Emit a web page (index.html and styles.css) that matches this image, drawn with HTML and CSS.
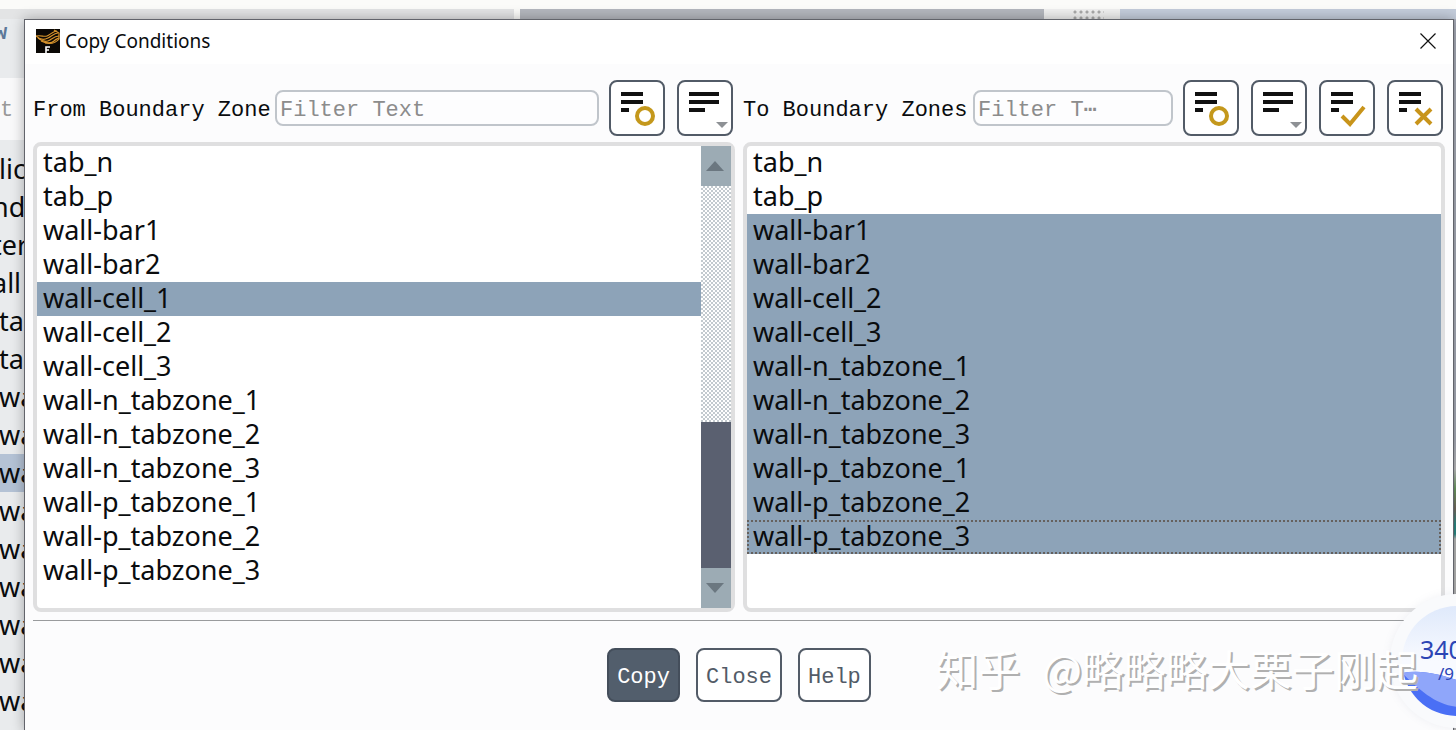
FILE: index.html
```html
<!DOCTYPE html>
<html lang="en">
<head>
  <meta charset="UTF-8" />
  <meta name="viewport" content="width=device-width, initial-scale=1.0" />
  <title>Copy Conditions</title>
  <link rel="stylesheet" href="styles.css">
</head>
<body>
  <!-- main window behind the dialog -->
  <div class="backdrop">
    <div class="topbar">
      <div class="tab tab-light"></div>
      <div class="tab tab-dark"></div>
      <div class="grip"></div>
      <div class="tab tab-blue"></div>
    </div>
    <div class="side-title">w</div>
    <div class="side-filter">t</div>
    <ul class="tree">
      <li>lic</li>
      <li class="outdent">nda</li>
      <li class="outdent">ter</li>
      <li class="outdent">all</li>
      <li>tab</li>
      <li>tab</li>
      <li>wa</li>
      <li>wa</li>
      <li class="active">wa</li>
      <li>wa</li>
      <li>wa</li>
      <li>wa</li>
      <li>wa</li>
      <li>wa</li>
      <li>wa</li>
    </ul>
    <div class="model"></div>
  </div>

  <div class="dialog" role="dialog" aria-labelledby="title">
    <div class="titlebar">
      <svg class="logo" viewBox="0 0 24 24">
        <rect width="24" height="24" fill="#0b0805"/>
        <g fill="none" stroke="#d8942c" stroke-width="1.2">
          <path d="M0 7c5-1 8 1 11 0s6-5 10-5"/>
          <path d="M0 7c4 4 8 4 12 2s6-5 10-5"/>
          <path d="M2 9c5 4 9 4 12 2s5-4 9-4"/>
          <path d="M5 12c6 3 11 2 13 0s3-2 5-3"/>
          <path d="M9 14c5 1 10 1 14-4V4l-5-3"/>
        </g>
        <path d="M10 24v-6h4M10 21h3" fill="none" stroke="#fff" stroke-width="1.6"/>
      </svg>
      <h1 id="title">Copy Conditions</h1>
      <button class="close" aria-label="Close window">
        <svg viewBox="0 0 16 16"><path d="M.5.5l15 15M15.5.5l-15 15" stroke="#111" stroke-width="1.2"/></svg>
      </button>
    </div>

    <div class="panes">
      <section class="pane">
        <div class="toolbar">
          <label class="from" for="fromFilter">From Boundary Zone</label>
          <input type="text" id="fromFilter" placeholder="Filter Text">
          <div class="tools">
            <button class="tool" aria-label="Toggle selection">
              <svg viewBox="0 0 52 52"><path d="M10 12h22M10 20h22M10 28h8" stroke="#111" stroke-width="4"/><circle cx="34" cy="34" r="8" fill="none" stroke="#c4981c" stroke-width="4"/></svg>
            </button>
            <button class="tool" aria-label="Group list">
              <svg viewBox="0 0 52 52"><path d="M10 12h30M10 20h30M10 28h16" stroke="#111" stroke-width="4"/><path d="M37 40h12l-6 6z" fill="#8e9195"/></svg>
            </button>
          </div>
        </div>
        <div class="listbox">
          <ul role="listbox" aria-label="From Boundary Zone">
            <li role="option">tab_n</li>
            <li role="option">tab_p</li>
            <li role="option">wall-bar1</li>
            <li role="option">wall-bar2</li>
            <li role="option" class="selected" aria-selected="true">wall-cell_1</li>
            <li role="option">wall-cell_2</li>
            <li role="option">wall-cell_3</li>
            <li role="option">wall-n_tabzone_1</li>
            <li role="option">wall-n_tabzone_2</li>
            <li role="option">wall-n_tabzone_3</li>
            <li role="option">wall-p_tabzone_1</li>
            <li role="option">wall-p_tabzone_2</li>
            <li role="option">wall-p_tabzone_3</li>
          </ul>
          <div class="scrollbar">
            <button aria-label="Scroll up"><svg viewBox="0 0 18 10"><path d="M0 10l9-10 9 10z"/></svg></button>
            <div class="track"></div>
            <div class="thumb"></div>
            <button aria-label="Scroll down"><svg viewBox="0 0 18 10"><path d="M0 0l9 10 9-10z"/></svg></button>
          </div>
        </div>
      </section>

      <section class="pane">
        <div class="toolbar">
          <label class="to" for="toFilter">To Boundary Zones</label>
          <input type="text" id="toFilter" placeholder="Filter T⋯">
          <div class="tools">
            <button class="tool" aria-label="Toggle selection">
              <svg viewBox="0 0 52 52"><path d="M10 12h22M10 20h22M10 28h8" stroke="#111" stroke-width="4"/><circle cx="34" cy="34" r="8" fill="none" stroke="#c4981c" stroke-width="4"/></svg>
            </button>
            <button class="tool" aria-label="Group list">
              <svg viewBox="0 0 52 52"><path d="M10 12h30M10 20h30M10 28h16" stroke="#111" stroke-width="4"/><path d="M37 40h12l-6 6z" fill="#8e9195"/></svg>
            </button>
            <button class="tool" aria-label="Select all">
              <svg viewBox="0 0 52 52"><path d="M10 12h22M10 20h22M10 28h8" stroke="#111" stroke-width="4"/><path d="M21 34l8 8 14-17" fill="none" stroke="#c8941a" stroke-width="4"/></svg>
            </button>
            <button class="tool" aria-label="Deselect all">
              <svg viewBox="0 0 52 52"><path d="M10 12h22M10 20h22M10 28h8" stroke="#111" stroke-width="4"/><path d="M27 27l15 15M42 27L27 42" stroke="#c8941a" stroke-width="4"/></svg>
            </button>
          </div>
        </div>
        <div class="listbox">
          <ul role="listbox" aria-label="To Boundary Zones" aria-multiselectable="true">
            <li role="option">tab_n</li>
            <li role="option">tab_p</li>
            <li role="option" class="selected" aria-selected="true">wall-bar1</li>
            <li role="option" class="selected" aria-selected="true">wall-bar2</li>
            <li role="option" class="selected" aria-selected="true">wall-cell_2</li>
            <li role="option" class="selected" aria-selected="true">wall-cell_3</li>
            <li role="option" class="selected" aria-selected="true">wall-n_tabzone_1</li>
            <li role="option" class="selected" aria-selected="true">wall-n_tabzone_2</li>
            <li role="option" class="selected" aria-selected="true">wall-n_tabzone_3</li>
            <li role="option" class="selected" aria-selected="true">wall-p_tabzone_1</li>
            <li role="option" class="selected" aria-selected="true">wall-p_tabzone_2</li>
            <li role="option" class="selected current" aria-selected="true">wall-p_tabzone_3</li>
          </ul>
        </div>
      </section>
    </div>

    <div class="actions">
      <button class="primary">Copy</button>
      <button>Close</button>
      <button>Help</button>
    </div>
  </div>

  <!-- floating memory ball -->
  <div class="ball">
    <div class="ball-inner">
      <svg viewBox="0 0 110 110">
        <path d="M0 67c20-4 40 2 58 8s36 2 52-8v43H0z" fill="#4a6ff5"/>
        <path d="M0 67c20-4 40 2 58 8s36 2 52-8c-8 24-30 35-52 34C34 100 18 84 0 67z" fill="#8fa6fa"/>
      </svg>
      <div class="ball-text">
        <strong>340</strong>
        <span>/9</span>
      </div>
    </div>
  </div>
  <div class="watermark"><span>知乎</span><span>@略略略大栗子刚起</span></div>
</body>
</html>
```
FILE: styles.css
```css
* {
  margin: 0; padding: 0; box-sizing: border-box;
}
body {
  height: 100vh;
  overflow: hidden;
  position: relative;
  background: #e9ebed;
  font-family: 'Noto Sans', 'Noto Sans CJK SC', sans-serif;
  color: #0a0c0e;
}
ul {
  list-style: none;
}
button {
  cursor: pointer;
}
.backdrop {
  height: 100%;
  overflow: hidden;
}
.topbar {
  display: flex;
  height: 19px;
  padding-top: 9px;
  background: #fbfbf9;
}
.tab-light {
  flex: 514;
  margin-right: 6px;
  background: #e3e4e5;
}
.tab-dark {
  flex: 524;
  background: #b4b7be;
}
.grip {
  flex: 32;
  padding: 0 16px 0 28px;
  background: radial-gradient(circle, #aaa 1px, transparent 2px) 0 0 / 6px 6px content-box, #f0f0f0;
}
.tab-blue {
  flex: 336;
  background: #c4cddb;
}
.side-title {
  height: 59px;
  font: bold 22px/30px 'Liberation Mono', monospace;
  color: #5d7899;
  text-indent: -6px;
}
.side-filter {
  height: 62px;
  margin-bottom: 10px;
  background: #f9f9fa;
  font: 22px/66px 'Liberation Mono', monospace;
  color: #999;
}
.tree li {
  width: 60px;
  height: 38px;
  font-size: 27px;
  line-height: 38px;
  text-indent: -1px;
}
.tree .outdent {
  text-indent: -8px;
}
.tree .active {
  background: #b4c2d5;
}
.model {
  position: absolute;
  top: 19px;
  right: 0;
  bottom: 0;
  width: 4px;
  background: linear-gradient(#a9adb9 0 420px, #bdbdbf 450px, #6c9a62 470px, #74695f 490px, #2d8a86 505px 515px, #b9b9b9 520px);
}
.dialog {
  position: absolute;
  top: 19px;
  left: 24px;
  right: 2px;
  bottom: -1px;
  display: flex;
  flex-direction: column;
  background: #fcfcfd;
  border: 1px solid #62646b;
  box-shadow: 0 0 12px rgba(0,0,0,0.3);
}
.titlebar {
  display: flex;
  align-items: center;
  height: 44px;
  padding: 0 17px 2px 11px;
  background: #fff;
}
.logo {
  width: 24px;
  height: 24px;
}
h1 {
  flex: 1;
  margin-left: 5px;
  font-size: 19px;
  font-weight: 400;
}
.close {
  width: 16px;
  height: 16px;
  border: none;
  background: none;
}
.close svg {
  display: block;
}
.panes {
  display: grid;
  grid-template-columns: 1fr 1fr;
  gap: 8px;
  padding: 16px 8px 8px;
}
.pane {
  min-width: 0;
}
.toolbar {
  display: flex;
  align-items: center;
  gap: 8px;
  height: 56px;
  margin-bottom: 6px;
  padding-right: 2px;
}
label, input, .actions button {
  font-family: 'Liberation Mono', 'DejaVu Sans Mono', monospace;
  font-size: 22px;
  padding-top: 4px;
}
label {
  flex: none;
  white-space: nowrap;
}
.from {
  width: 234px;
}
.to {
  width: 222px;
}
input {
  flex: 1;
  min-width: 0;
  height: 36px;
  padding: 4px 3px 0;
  border: 2px solid #c0c5cb;
  border-radius: 8px;
  background: #fdfdfe;
}
input::placeholder {
  color: #8c8c8c;
}
.tools {
  display: flex;
  gap: 12px;
  margin-left: 2px;
}
.tool {
  width: 56px;
  height: 56px;
  border: 2px solid #525b67;
  border-radius: 8px;
  background: #fff;
}
.tool svg {
  display: block;
}
.listbox {
  display: flex;
  height: 470px;
  border: 4px solid #dfdfe0;
  border-radius: 8px;
  background: #fff;
}
.listbox ul {
  flex: 1;
}
.listbox li {
  height: 34px;
  padding-left: 6px;
  font-size: 27px;
  line-height: 32px;
}
.listbox .selected {
  background: #8da3b8;
}
.listbox .current {
  outline: 2px dotted #66615e;
  outline-offset: -2px;
}
.scrollbar {
  display: flex;
  flex-direction: column;
  width: 30px;
}
.scrollbar button {
  display: flex;
  align-items: center;
  justify-content: center;
  height: 40px;
  padding-right: 2px;
  border: none;
  background: #9cabb4;
}
.scrollbar svg {
  width: 18px;
  height: 10px;
  fill: #6b7780;
}
.track {
  flex: 236;
  background: repeating-conic-gradient(#c3cacf 0 25%, #fff 0 50%) 0 0 / 4px 4px;
}
.thumb {
  flex: 146;
  background: #5a6070;
}
.actions {
  display: flex;
  justify-content: center;
  gap: 16px;
  margin: 0 8px;
  padding-top: 27px;
  border-top: 1px solid #999b9d;
}
.actions button {
  height: 54px;
  padding: 4px 8px 0;
  border: 2px solid #525b67;
  border-radius: 8px;
  background: #fff;
  color: #525b67;
}
.actions .primary {
  border-color: #444e5b;
  background: #525e6c;
  color: #fff;
}
.ball {
  position: absolute;
  right: -68px;
  bottom: 2px;
  padding: 12px;
  border-radius: 50%;
  background: #f9fafc;
  box-shadow: 0 0 8px rgba(120,130,160,0.1);
}
.ball-inner {
  position: relative;
  width: 110px;
  height: 110px;
  border-radius: 50%;
  overflow: hidden;
  background: linear-gradient(#dfe9fb, #f8faff 50%);
}
.ball-inner svg {
  display: block;
}
.ball-text {
  position: absolute;
  top: 28px;
  left: 18px;
  display: flex;
  flex-direction: column;
  color: #2b45b5;
}
.ball-text strong {
  font-size: 25px;
  font-weight: 400;
  line-height: 30px;
}
.ball-text span {
  padding-left: 18px;
  font-size: 17px;
  line-height: 20px;
}
.watermark {
  position: absolute;
  right: 38px;
  bottom: 32px;
  display: flex;
  gap: 22px;
  font-family: 'Noto Sans CJK SC', sans-serif;
  font-size: 42px;
  line-height: 60px;
  color: #fff;
  text-shadow: 2px 2px 0 #b0b0b0;
}
```
